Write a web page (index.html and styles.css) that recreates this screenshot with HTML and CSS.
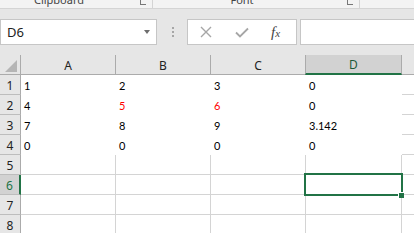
FILE: index.html
```html
<!DOCTYPE html>
<html>
<head>
<meta charset="utf-8">
<link rel="stylesheet" href="styles.css">
</head>
<body>
<div class="app">
  <div class="ribbon">
    <div class="group g1">
      <span class="glabel">Clipboard</span>
      <span class="launcher"></span>
    </div>
    <div class="group g2">
      <span class="glabel">Font</span>
      <span class="launcher"></span>
    </div>
  </div>
  <div class="fbar">
    <div class="namebox">
      <span class="nbtext">D6</span>
      <span class="nbarrow"></span>
    </div>
    <div class="dots"><i></i><i></i><i></i></div>
    <div class="fbtns">
      <svg class="ic-x" width="12" height="12" viewBox="0 0 12 12"><path d="M1 1L11 11M11 1L1 11" stroke="#a6a6a6" stroke-width="1.4" fill="none"/></svg>
      <svg class="ic-ok" width="14" height="11" viewBox="0 0 14 11"><path d="M1 5.5L5 9.5L13 1.5" stroke="#a6a6a6" stroke-width="1.8" fill="none"/></svg>
      <span class="fx"><span class="fx-f">f</span><span class="fx-x">x</span></span>
    </div>
    <div class="finput"></div>
  </div>
  <div class="sheet">
    <div class="corner"><span class="tri"></span></div>
    <div class="ch">A</div>
    <div class="ch">B</div>
    <div class="ch">C</div>
    <div class="ch sel">D</div>
    <div class="ch last"></div>

    <div class="rh">1</div>
    <div class="c f">1</div><div class="c f">2</div><div class="c f">3</div><div class="c f">0</div><div class="c e"></div>

    <div class="rh">2</div>
    <div class="c f">4</div><div class="c f red">5</div><div class="c f red">6</div><div class="c f">0</div><div class="c e"></div>

    <div class="rh">3</div>
    <div class="c f">7</div><div class="c f">8</div><div class="c f">9</div><div class="c f">3.142</div><div class="c e"></div>

    <div class="rh">4</div>
    <div class="c f">0</div><div class="c f">0</div><div class="c f">0</div><div class="c f">0</div><div class="c e"></div>

    <div class="rh">5</div>
    <div class="c"></div><div class="c"></div><div class="c"></div><div class="c"></div><div class="c e"></div>

    <div class="rh sel">6</div>
    <div class="c"></div><div class="c"></div><div class="c"></div><div class="c active"><span class="selbox"></span><span class="handle"></span></div><div class="c e"></div>

    <div class="rh">7</div>
    <div class="c"></div><div class="c"></div><div class="c"></div><div class="c"></div><div class="c e"></div>

    <div class="rh">8</div>
    <div class="c"></div><div class="c"></div><div class="c"></div><div class="c"></div><div class="c e"></div>
  </div>
</div>
</body>
</html>
```

FILE: styles.css
```css
html, body {
  margin: 0;
  padding: 0;
  background: #e6e6e6;
  overflow: hidden;
}
.app {
  width: 414px;
  height: 233px;
  overflow: hidden;
  font-family: "Noto Sans", "Liberation Sans", sans-serif;
}
.ribbon {
  height: 8px;
  background: #f3f3f3;
  border-bottom: 1px solid #d4d4d4;
  display: flex;
  overflow: hidden;
}
.group {
  display: flex;
  border-right: 1px solid #d4d4d4;
  height: 8px;
}
.g1 { width: 152px; }
.g2 { width: 206px; }
.glabel {
  display: block;
  flex: 1;
  text-align: center;
  font-size: 11px;
  line-height: 11px;
  margin-top: -6px;
  color: #444;
}
.g1 .glabel { padding-right: 22px; }
.g2 .glabel { padding-right: 16px; }
.launcher {
  width: 5px;
  height: 4px;
  border-left: 1px solid #777;
  border-bottom: 1px solid #777;
  margin-right: 6px;
  margin-top: 0;
}
.fbar {
  height: 46px;
  padding-top: 10px;
  box-sizing: border-box;
  display: flex;
  align-items: flex-start;
}
.namebox {
  width: 157px;
  height: 26px;
  box-sizing: border-box;
  background: #fff;
  border: 1px solid #c6c6c6;
  display: flex;
  align-items: center;
  justify-content: space-between;
  padding: 0 6px 0 6px;
}
.nbtext {
  font-size: 13px;
  color: #222;
  font-family: "Noto Sans", sans-serif;
}
.nbarrow {
  width: 0;
  height: 0;
  border-left: 3.5px solid transparent;
  border-right: 3.5px solid transparent;
  border-top: 4px solid #6d6d6d;
}
.dots {
  width: 30px;
  display: flex;
  flex-direction: column;
  align-items: center;
  gap: 2px;
  padding-top: 8px;
  padding-left: 1px;
  box-sizing: border-box;
}
.dots i {
  display: block;
  width: 2px;
  height: 2px;
  background: #a6a6a6;
}
.fbtns {
  width: 110px;
  height: 26px;
  box-sizing: border-box;
  background: #fff;
  border: 1px solid #c6c6c6;
  display: flex;
  align-items: center;
  padding-left: 12px;
}
.ic-x { margin-right: 23px; }
.ic-ok { margin-right: 22px; }
.fx {
  font-family: "Liberation Serif", "DejaVu Serif", serif;
  font-style: italic;
  color: #444;
  font-size: 15px;
  line-height: 1;
}
.fx-x { font-size: 11px; }
.finput {
  flex: 1;
  margin-left: 3px;
  height: 26px;
  box-sizing: border-box;
  background: #fff;
  border: 1px solid #c6c6c6;
  border-right: none;
}
.sheet {
  display: grid;
  grid-template-columns: 21px 95px 95px 95px 96px 1fr;
  grid-template-rows: repeat(9, 20px);
  background: #fff;
}
.sheet > div {
  box-sizing: border-box;
}
.corner {
  background: #e6e6e6;
  border-right: 1px solid #ababab;
  border-bottom: 1px solid #ababab;
  display: flex;
  align-items: flex-end;
  justify-content: flex-end;
  padding: 0 3px 2px 0;
}
.tri {
  width: 0;
  height: 0;
  border-left: 12px solid transparent;
  border-bottom: 12px solid #b5b5b5;
}
.ch {
  background: #e6e6e6;
  border-right: 1px solid #ababab;
  border-bottom: 1px solid #ababab;
  display: flex;
  align-items: center;
  justify-content: center;
  font-size: 12px;
  color: #222;
  padding-top: 1px;
}
.ch.last { border-right: none; }
.ch.sel {
  background: #d2d2d2;
  color: #1e5a3a;
  border-bottom: 2px solid #217346;
  border-left: 1px solid #ababab;
  margin-left: -1px;
}
.rh {
  background: #e6e6e6;
  border-right: 1px solid #ababab;
  border-bottom: 1px solid #bdbdbd;
  display: flex;
  align-items: center;
  justify-content: center;
  font-size: 12px;
  color: #222;
  padding-top: 1px;
}
.rh.sel {
  background: #d2d2d2;
  color: #217346;
  border-right: 2px solid #217346;
}
.c {
  border-right: 1px solid #d4d4d4;
  border-bottom: 1px solid #d4d4d4;
  font-family: Lato, "Liberation Sans", sans-serif;
  font-size: 11px;
  color: #000;
  display: flex;
  align-items: flex-end;
  padding: 0 0 3px 3px;
  line-height: 1;
}
.c.f { border-color: #fff; }
.c.e { border-right: none; }
.red { color: #ff0000; }
.active { position: relative; }
.selbox {
  position: absolute;
  left: -2px;
  top: -2px;
  right: -2px;
  bottom: -2px;
  border: 2px solid #217346;
}
.handle {
  position: absolute;
  width: 5px;
  height: 5px;
  right: -3px;
  bottom: -4px;
  background: #217346;
  border-left: 1px solid #fff;
  border-top: 1px solid #fff;
}
```
